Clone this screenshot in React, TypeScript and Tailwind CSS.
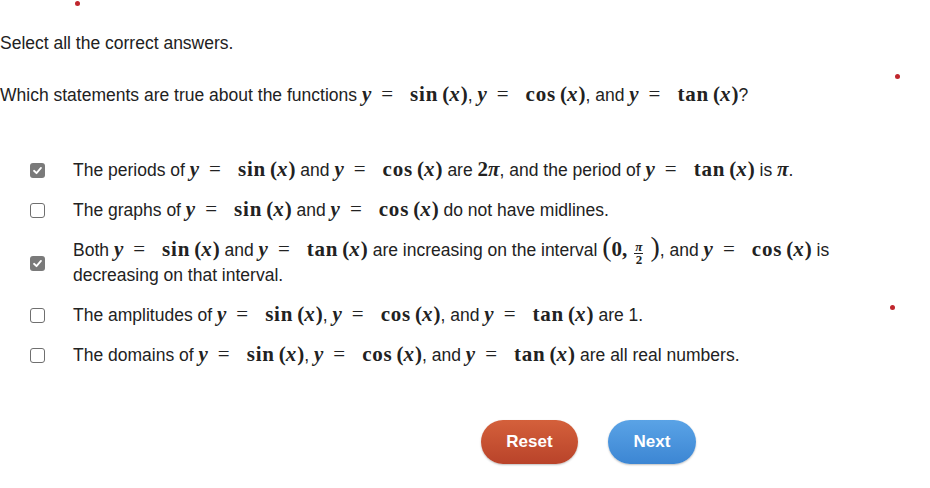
import { ReactNode } from 'react';

type Option = {
  checked: boolean;
  content: ReactNode;
};

// Math bits, rendered with a bold serif face like the KaTeX output in the quiz
const V = ({ children }: { children: ReactNode }) => (
  <span className="italic">{children}</span>
);

const Eq = () => <span className="mx-[10px] not-italic font-normal">=</span>;

const Fn = ({ name }: { name: string }) => (
  <span className="ml-[7px]">
    <span className="tracking-[0.8px]">{name}</span>
    <span className="ml-[4px]">(</span>
    <V>x</V>
    <span className="ml-[1px]">)</span>
  </span>
);

const M = ({ children }: { children: ReactNode }) => (
  <span className="font-['Liberation_Serif',serif] text-[21px] font-bold leading-[0]">
    {children}
  </span>
);

const YEq = ({ fn }: { fn: string }) => (
  <M>
    <V>y</V>
    <Eq />
    <Fn name={fn} />
  </M>
);

const Half = () => (
  <M>
    <span className="text-[28px] font-normal">(</span>0,
    <span className="mx-[7px] inline-flex translate-y-[2px] flex-col items-center align-middle text-[13px] leading-[12px]">
      <span className="border-b border-[#222] px-[1px] italic">π</span>
      <span>2</span>
    </span>
    <span className="text-[28px] font-normal">)</span>
  </M>
);

const CheckBox = ({ checked }: { checked: boolean }) =>
  checked ? (
    <span className="flex h-[15px] w-[15px] items-center justify-center rounded-[3px] bg-[#7a7a7a]">
      <svg width="11" height="11" viewBox="0 0 12 12" fill="none">
        <path
          d="M2.2 6.3 L4.9 8.9 L9.8 3.2"
          stroke="white"
          strokeWidth="2"
          strokeLinecap="round"
          strokeLinejoin="round"
        />
      </svg>
    </span>
  ) : (
    <span className="block h-[15px] w-[15px] rounded-[3px] border border-[#6f6f6f] bg-white" />
  );

const options: Option[] = [
  {
    checked: true,
    content: (
      <>
        The periods of <YEq fn="sin" /> and <YEq fn="cos" /> are{' '}
        <M>
          2<V>π</V>
        </M>
        , and the period of <YEq fn="tan" /> is{' '}
        <M>
          <V>π</V>
        </M>
        .
      </>
    ),
  },
  {
    checked: false,
    content: (
      <>
        The graphs of <YEq fn="sin" /> and <YEq fn="cos" /> do not have midlines.
      </>
    ),
  },
  {
    checked: true,
    content: (
      <>
        Both <YEq fn="sin" /> and <YEq fn="tan" /> are increasing on the interval{' '}
        <Half />, and <YEq fn="cos" /> is decreasing on that interval.
      </>
    ),
  },
  {
    checked: false,
    content: (
      <>
        The amplitudes of <YEq fn="sin" />, <YEq fn="cos" />, and <YEq fn="tan" /> are 1.
      </>
    ),
  },
  {
    checked: false,
    content: (
      <>
        The domains of <YEq fn="sin" />, <YEq fn="cos" />, and <YEq fn="tan" /> are all
        real numbers.
      </>
    ),
  },
];

const Dot = ({ className }: { className: string }) => (
  <span className={`absolute h-[5px] w-[5px] rounded-full bg-[#c0262d] ${className}`} />
);

export default function App() {
  return (
    <div className="relative h-[488px] w-[930px] overflow-hidden bg-white font-['Liberation_Sans',Arial,sans-serif] text-[17.5px] text-[#222]">
      <Dot className="left-[75px] top-[1px]" />
      <Dot className="left-[895px] top-[74px]" />
      <Dot className="left-[890px] top-[305px]" />

      <div className="flex flex-col pt-[32px]">
        <p className="leading-[22px]">Select all the correct answers.</p>
        <p className="mt-[30px] leading-[22px]">
          Which statements are true about the functions <YEq fn="sin" />,{' '}
          <YEq fn="cos" />, and <YEq fn="tan" />?
        </p>

        <ul className="mt-[53px] flex flex-col gap-[17px]">
          {options.map((option, i) => (
            <li key={i} className="flex items-center">
              <span className="w-[73px] pl-[30px]">
                <CheckBox checked={option.checked} />
              </span>
              <span className="w-[775px] leading-[23px]">{option.content}</span>
            </li>
          ))}
        </ul>

        <div className="mt-[53px] flex gap-[30px] pl-[481px]">
          <button className="h-[44px] w-[97px] rounded-full bg-gradient-to-b from-[#d4603b] to-[#b9432a] text-[17px] font-bold text-white shadow-[0_1px_2px_rgba(0,0,0,0.25)]">
            Reset
          </button>
          <button className="h-[44px] w-[88px] rounded-full bg-gradient-to-b from-[#5aa3e6] to-[#3c86d3] text-[17px] font-bold text-white shadow-[0_1px_2px_rgba(0,0,0,0.25)]">
            Next
          </button>
        </div>
      </div>
    </div>
  );
}
